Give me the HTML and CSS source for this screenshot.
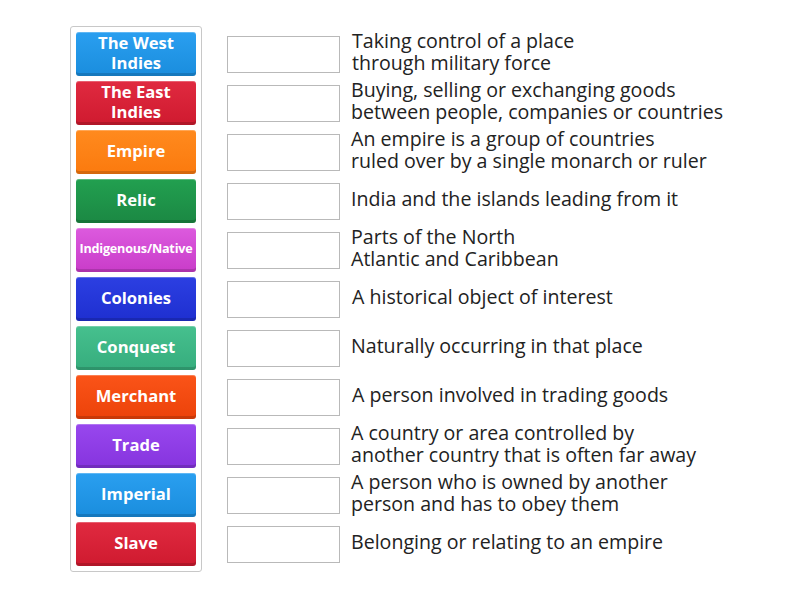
FILE: index.html
```html
<!DOCTYPE html>
<html>
<head>
<meta charset="utf-8">
<link rel="stylesheet" href="styles.css">
</head>
<body>
<div class="game">
  <div class="bank">
    <div class="tile c-blue">The West<br>Indies</div>
    <div class="tile c-red">The East<br>Indies</div>
    <div class="tile c-orange">Empire</div>
    <div class="tile c-green">Relic</div>
    <div class="tile c-magenta small">Indigenous/Native</div>
    <div class="tile c-navy">Colonies</div>
    <div class="tile c-mint">Conquest</div>
    <div class="tile c-vermilion">Merchant</div>
    <div class="tile c-purple">Trade</div>
    <div class="tile c-blue">Imperial</div>
    <div class="tile c-red">Slave</div>
  </div>
  <div class="targets">
    <div class="row"><div class="slot"></div><div class="def ind">Taking control of a place<br>through military force</div></div>
    <div class="row"><div class="slot"></div><div class="def">Buying, selling or exchanging goods<br>between people, companies or countries</div></div>
    <div class="row"><div class="slot"></div><div class="def">An empire is a group of countries<br>ruled over by a single monarch or ruler</div></div>
    <div class="row"><div class="slot"></div><div class="def">India and the islands leading from it</div></div>
    <div class="row"><div class="slot"></div><div class="def">Parts of the North<br>Atlantic and Caribbean</div></div>
    <div class="row"><div class="slot"></div><div class="def ind">A historical object of interest</div></div>
    <div class="row"><div class="slot"></div><div class="def">Naturally occurring in that place</div></div>
    <div class="row"><div class="slot"></div><div class="def ind">A person involved in trading goods</div></div>
    <div class="row"><div class="slot"></div><div class="def">A country or area controlled by<br>another country that is often far away</div></div>
    <div class="row"><div class="slot"></div><div class="def">A person who is owned by another<br>person and has to obey them</div></div>
    <div class="row"><div class="slot"></div><div class="def">Belonging or relating to an empire</div></div>
  </div>
</div>
</body>
</html>
```
FILE: styles.css
```css
html, body {
  margin: 0;
  padding: 0;
  background: #fff;
}
body {
  font-family: "Open Sans", "DejaVu Sans", sans-serif;
}
.game {
  display: flex;
  align-items: flex-start;
  padding: 26px 0 0 70px;
  gap: 25px;
}
.bank {
  display: flex;
  flex-direction: column;
  gap: 5px;
  padding: 5px;
  border: 1px solid #c8c8c8;
  border-radius: 3px;
}
.tile {
  width: 120px;
  height: 44px;
  box-sizing: border-box;
  padding-bottom: 3px;
  border-radius: 3px;
  display: flex;
  align-items: center;
  justify-content: center;
  text-align: center;
  color: #fff;
  font-weight: 700;
  font-size: 16.6px;
  line-height: 19.5px;
  box-shadow: inset 0 -3px 0 rgba(0,0,0,0.15), inset 0 1px 0 rgba(255,255,255,0.25);
}
.tile.small {
  font-size: 12.6px;
  letter-spacing: -0.2px;
}
.c-blue { background: linear-gradient(#2a9ff0, #1a8ddd); }
.c-red { background: linear-gradient(#e02a40, #cf1a2f); }
.c-orange { background: linear-gradient(#ff8a1e, #fb7a0e); }
.c-green { background: linear-gradient(#22a050, #1b8843); }
.c-magenta { background: linear-gradient(#dc5ade, #c93cc9); }
.c-navy { background: linear-gradient(#2c3fe2, #1e2fd0); }
.c-mint { background: linear-gradient(#46c08e, #36ad7d); }
.c-vermilion { background: linear-gradient(#fa5418, #ec420a); }
.c-purple { background: linear-gradient(#9847ee, #8634de); }
.targets {
  display: flex;
  flex-direction: column;
  gap: 5px;
  padding-top: 6px;
}
.row {
  height: 44px;
  display: flex;
  align-items: center;
  gap: 11px;
}
.slot {
  width: 113px;
  height: 37px;
  box-sizing: border-box;
  border: 1px solid #b9b9b9;
  background: #fff;
  flex: none;
}
.def {
  font-size: 19.6px;
  line-height: 22px;
  color: #222;
  white-space: nowrap;
  margin-top: -4px;
}
.def.ind {
  padding-left: 1px;
}
```
